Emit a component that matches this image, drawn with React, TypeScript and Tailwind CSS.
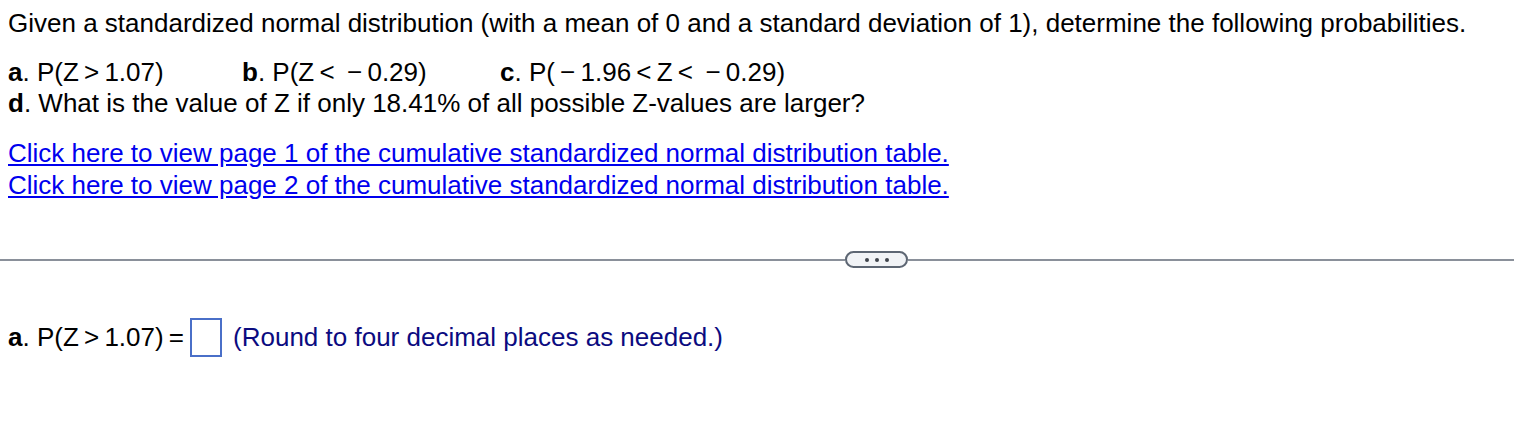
export default function App() {
  return (
    <div className="min-h-[438px] w-[1514px] bg-white font-['Liberation_Sans',Arial,sans-serif] text-[26px] text-black">
      <div className="px-2 pt-[8px]">
        <p className="leading-[31px]">
          Given a standardized normal distribution (with a mean of 0 and a standard deviation of 1), determine the
          following probabilities.
        </p>
        <div className="mt-[18px] leading-[31px]">
          <div className="flex">
            <span className="w-[234px]">
              <b>a</b>. P(Z&thinsp;&gt;&thinsp;1.07)
            </span>
            <span className="w-[258px]">
              <b>b</b>. P(Z&thinsp;&lt; &thinsp;&minus;&thinsp;0.29)
            </span>
            <span>
              <b>c</b>. P(&thinsp;&minus;&thinsp;1.96&thinsp;&lt;&thinsp;Z&thinsp;&lt; &thinsp;&minus;&thinsp;0.29)
            </span>
          </div>
          <div>
            <b>d</b>. What is the value of Z if only 18.41% of all possible Z-values are larger?
          </div>
        </div>
        <div className="mt-[18px] leading-[32px] text-[#0000ee]">
          <div>
            <a href="#" className="underline">
              Click here to view page 1 of the cumulative standardized normal distribution table.
            </a>
          </div>
          <div>
            <a href="#" className="underline">
              Click here to view page 2 of the cumulative standardized normal distribution table.
            </a>
          </div>
        </div>
      </div>
      <div className="mt-[50px] flex items-center">
        <div className="h-[2px] w-[845px] bg-[#8a909a]" />
        <div className="flex h-[17px] w-[63px] items-center justify-center gap-[6px] rounded-full border-2 border-[#5d6673] bg-[#f1f3f6]">
          <span className="h-[4px] w-[4px] rounded-full bg-[#3f444c]" />
          <span className="h-[4px] w-[4px] rounded-full bg-[#3f444c]" />
          <span className="h-[4px] w-[4px] rounded-full bg-[#3f444c]" />
        </div>
        <div className="h-[2px] flex-1 bg-[#8a909a]" />
      </div>
      <div className="mt-[50px] flex items-center px-2">
        <span>
          <b>a</b>. P(Z&thinsp;&gt;&thinsp;1.07)&thinsp;=
        </span>
        <span className="ml-[6px] inline-block h-[39px] w-[32px] border-2 border-[#4a6fc8]" />
        <span className="ml-[11px] text-[#0b0b80]">(Round to four decimal places as needed.)</span>
      </div>
    </div>
  );
}
